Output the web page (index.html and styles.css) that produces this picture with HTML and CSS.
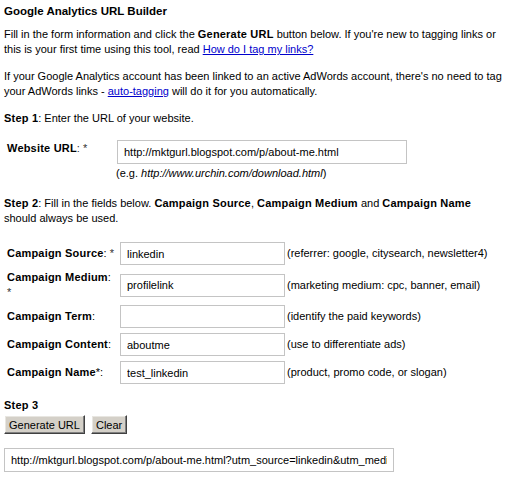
FILE: index.html
```html
<!DOCTYPE html>
<html lang="en">
<head>
<meta charset="utf-8">
<title>Google Analytics URL Builder</title>
<link rel="stylesheet" href="styles.css">
</head>
<body>
<div class="builder">
  <h1 class="title">Google Analytics URL Builder</h1>

  <p class="intro">Fill in the form information and click the <b>Generate URL</b> button below. If you're new to tagging links or this is your first time using this tool, read <a href="#">How do I tag my links?</a></p>

  <p class="intro">If your Google Analytics account has been linked to an active AdWords account, there's no need to tag your AdWords links - <a href="#">auto-tagging</a> will do it for you automatically.</p>

  <p class="step"><b>Step 1</b>: Enter the URL of your website.</p>

  <div class="site-row">
    <label class="site-label" for="site"><b>Website URL</b><span class="req">: *</span></label>
    <div class="site-field">
      <input class="text site-input" id="site" type="text" value="http://mktgurl.blogspot.com/p/about-me.html">
      <div class="example">(e.g. <i>http://www.urchin.com/download.html</i>)</div>
    </div>
  </div>

  <p class="step step-2"><b>Step 2</b>: Fill in the fields below. <b>Campaign Source</b>, <b>Campaign Medium</b> and <b>Campaign Name</b> should always be used.</p>

  <div class="fields">
    <label class="f-label" for="src"><b>Campaign Source</b>: <span class="req">*</span></label>
    <input class="text f-input" id="src" type="text" value="linkedin">
    <span class="hint">(referrer: google, citysearch, newsletter4)</span>

    <label class="f-label" for="med"><b>Campaign Medium</b>:<br><span class="req">*</span></label>
    <input class="text f-input" id="med" type="text" value="profilelink">
    <span class="hint">(marketing medium: cpc, banner, email)</span>

    <label class="f-label" for="term"><b>Campaign Term</b>:</label>
    <input class="text f-input" id="term" type="text" value="">
    <span class="hint">(identify the paid keywords)</span>

    <label class="f-label" for="content"><b>Campaign Content</b>:</label>
    <input class="text f-input" id="content" type="text" value="aboutme">
    <span class="hint">(use to differentiate ads)</span>

    <label class="f-label" for="name"><b>Campaign Name</b>*:</label>
    <input class="text f-input" id="name" type="text" value="test_linkedin">
    <span class="hint">(product, promo code, or slogan)</span>
  </div>

  <p class="step step-3"><b>Step 3</b></p>
  <div class="actions">
    <button class="btn" type="button">Generate URL</button>
    <button class="btn" type="button">Clear</button>
  </div>

  <input class="text result" type="text" value="http://mktgurl.blogspot.com/p/about-me.html?utm_source=linkedin&amp;utm_medium=profilelink&amp;utm_content=aboutme&amp;utm_campaign=test_linkedin">
</div>
</body>
</html>
```

FILE: styles.css
```css
html, body {
  margin: 0;
  padding: 0;
  background: #fff;
}

body {
  font-family: "Liberation Sans", Arial, sans-serif;
  font-size: 11px;
  line-height: 15px;
  color: #000;
}

.builder {
  padding: 4px 4px 0 4px;
}

.title {
  margin: 0;
  font-size: 11.5px;
  line-height: 15px;
  font-weight: bold;
}

.intro,
.step {
  width: 500px;
}

.intro b,
.step b,
.f-label b,
.site-label b {
  letter-spacing: 0.2px;
}

.intro {
  margin: 8px 0 0 0;
}

.intro + .intro {
  margin-top: 12px;
}

a {
  color: #0000cc;
  text-decoration: underline;
}

.step {
  margin: 12px 0 0 0;
}

.req {
  color: #333;
}

/* Step 1: website URL */
.site-row {
  display: flex;
  margin-top: 14px;
  padding-left: 3px;
}

.site-label {
  width: 110px;
  padding-top: 1px;
}

.text {
  box-sizing: border-box;
  font-family: "Liberation Sans", Arial, sans-serif;
  font-size: 11px;
  color: #000;
  background: #fff;
  border: 1px solid #c4c4c4;
  border-radius: 0;
  padding: 0 6px;
  margin: 0;
  outline: none;
}

.site-input {
  width: 290px;
  height: 24px;
}

.example {
  margin-top: 2px;
  margin-left: -1px;
}

.step-2 {
  margin-top: 15px;
}

/* Step 2: campaign fields */
.fields {
  display: grid;
  grid-template-columns: 109px 165px auto;
  column-gap: 4px;
  row-gap: 5px;
  align-items: center;
  margin-top: 16px;
  padding-left: 3px;
}

.f-input {
  height: 23px;
  width: 165px;
}

.hint {
  white-space: nowrap;
  margin-left: -2px;
}

.step-3 {
  margin-top: 14px;
}

/* Step 3: buttons and output */
.actions {
  display: flex;
  gap: 6px;
  margin-top: 2px;
}

.btn {
  font-family: "Liberation Sans", Arial, sans-serif;
  font-size: 11px;
  color: #000;
  background: #d4d0c8;
  height: 19px;
  padding: 0 4px;
  margin: 0;
  border: 1px solid;
  border-color: #fff #404040 #404040 #fff;
  box-shadow: inset -1px -1px 0 #808080, inset 1px 1px 0 #e8e6e1;
  border-radius: 0;
}

.result {
  display: block;
  width: 390px;
  height: 24px;
  margin-top: 14px;
}
```
